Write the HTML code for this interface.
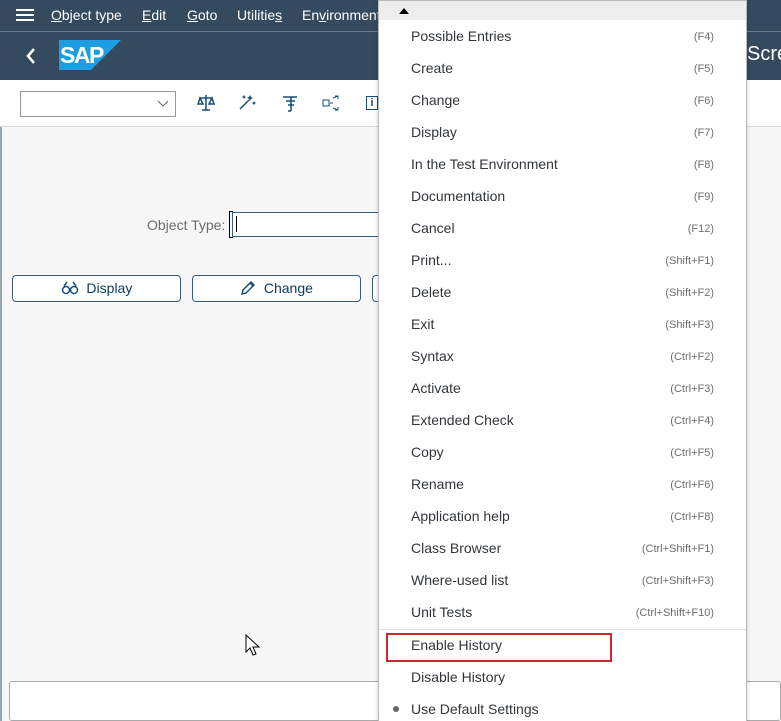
<!DOCTYPE html>
<html><head><style>
*{margin:0;padding:0;box-sizing:border-box}
body{width:781px;height:721px;overflow:hidden;position:relative;background:#f7f7f7;font-family:"Liberation Sans",Arial,sans-serif;}
.a{position:absolute}
.top{left:0;top:0;width:781px;height:31px;background:#354a5f;color:#fff;font-size:14px}
.top span{position:absolute;top:7px}
.sep{left:0;top:31px;width:781px;height:1px;background:#6a7a8a}
.bar2{left:0;top:32px;width:781px;height:48px;background:#354a5f}
.tb{left:0;top:80px;width:781px;height:47px;background:#fff;border-bottom:1px solid #d9d9d9}
.menu{left:378px;top:0;width:369px;height:721px;background:#fff;border-left:1px solid #bbb;border-right:1px solid #bbb;border-top:1px solid #bbb;box-shadow:0 0 4px rgba(0,0,0,.2)}
.it{position:absolute;left:32px;width:303px;font-size:14px;color:#32363a;height:20px}
.it b{font-weight:normal;position:absolute;right:0;top:3px;font-size:11px;color:#6a6d70}
.btn{top:275px;width:169px;height:27px;border:1px solid #3a5a7a;border-radius:4px;background:#fff;color:#0a3d62;font-size:14px;text-align:center;line-height:25px}
.ic{stroke:#1a4b7a;fill:none;stroke-width:1.5}
</style></head><body>
<div class="a" style="left:0;top:127px;width:2px;height:594px;background:#9aa7b3"></div>
<div class="a top">
<div class="a" style="left:16px;top:9px;width:18px;height:2px;background:#fff;box-shadow:0 5px 0 #fff,0 10px 0 #fff"></div>
<span style="left:51px"><u>O</u>bject type</span>
<span style="left:142px"><u>E</u>dit</span>
<span style="left:187px"><u>G</u>oto</span>
<span style="left:237px">Utilitie<u>s</u></span>
<span style="left:302px">En<u>v</u>ironment</span>
</div>
<div class="a sep"></div>
<div class="a bar2">
<svg class="a" style="left:24px;top:14px" width="14" height="20"><path d="M10 3 L4 10 L10 17" stroke="#fff" stroke-width="2.5" fill="none"/></svg>
<svg class="a" style="left:59px;top:8px" width="62" height="30"><polygon points="0,0 62,0 32,30 0,30" fill="#1d9ee0"/><text x="1" y="23" font-family="Liberation Sans" font-weight="bold" font-size="23" letter-spacing="-1.5" fill="#fff">SAP</text></svg>
<span class="a" style="left:747px;top:11px;color:#fff;font-size:20px">Scre</span>
</div>
<div class="a tb">
<div class="a" style="left:20px;top:11px;width:156px;height:26px;border:1px solid #999;background:#fff"></div>
<svg class="a" style="left:157px;top:20px" width="12" height="8"><path d="M1 1 L6 6 L11 1" stroke="#666" fill="none"/></svg>
<svg class="a" style="left:197px;top:14px" width="18" height="18"><path class="ic" d="M9 1V16 M3 4H15 M5 16H13 M3 4L1 10H6Z M15 4L12 10H17Z"/></svg>
<svg class="a" style="left:238px;top:13px" width="18" height="18"><path class="ic" d="M2 16L11 7"/><path d="M12 2l1 2 2 1-2 1-1 2-1-2-2-1 2-1z M16 8l.7 1.3 1.3.7-1.3.7-.7 1.3-.7-1.3-1.3-.7 1.3-.7z M6 2l.7 1.3 1.3.7-1.3.7-.7 1.3-.7-1.3-1.3-.7 1.3-.7z" fill="#1a4b7a"/></svg>
<svg class="a" style="left:282px;top:14px" width="16" height="18"><path class="ic" d="M1 3H15 M4 7H13 M9 3V17 M6 11H12 M9 17H6"/></svg>
<svg class="a" style="left:322px;top:15px" width="18" height="16"><rect x="1" y="5" width="6" height="6" fill="none" stroke="#1a4b7a"/><path d="M8 8 H11 M11 3 L16 1 M11 13 L16 15 M13 1h3v3 M13 15h3v-3" stroke="#1a4b7a" fill="none"/></svg>
<div class="a" style="left:366px;top:16px;width:12px;height:14px;border:1px solid #1a4b7a;font-size:11px;font-weight:bold;color:#1a4b7a;text-align:center;line-height:12px">i</div>
</div>
<span class="a" style="left:147px;top:217px;font-size:14px;color:#6a6d70">Object Type:</span>
<div class="a" style="left:232px;top:212px;width:150px;height:25px;border:1px solid #3a5a7a;background:#fff"></div>
<div class="a" style="left:229px;top:211px;width:4px;height:27px;border:1px solid #000;border-right:none"></div>
<div class="a" style="left:236px;top:216px;width:1px;height:16px;background:#000"></div>
<div class="a btn" style="left:12px"><svg width="18" height="14" style="vertical-align:-2px"><circle cx="5" cy="9" r="3.5" class="ic"/><circle cx="13" cy="9" r="3.5" class="ic"/><path class="ic" d="M3 5L6 1 M15 5L12 1"/></svg>&nbsp; Display</div>
<div class="a btn" style="left:192px"><svg width="16" height="16" style="vertical-align:-3px"><path class="ic" d="M2 14L3 10L11 2L14 5L6 13Z M10 3L13 6"/></svg>&nbsp; Change</div>
<div class="a btn" style="left:372px;width:20px"></div>
<div class="a" style="left:9px;top:681px;width:772px;height:40px;border:1px solid #aaa;border-radius:3px;background:#fff"></div>
<svg class="a" style="left:245px;top:634px" width="18" height="26"><path d="M1 1 L1 18 L5 14 L8 21 L11 20 L8 13 L14 13 Z" fill="#fff" stroke="#000"/></svg>
<div class="a menu">
<div class="a" style="left:0;top:0;width:367px;height:19px;background:#ededed"></div>
<svg class="a" style="left:20px;top:7px" width="10" height="6"><polygon points="0,6 5,0 10,6" fill="#000"/></svg>
<div class="it" style="top:27px">Possible Entries<b>(F4)</b></div>
<div class="it" style="top:59px">Create<b>(F5)</b></div>
<div class="it" style="top:91px">Change<b>(F6)</b></div>
<div class="it" style="top:123px">Display<b>(F7)</b></div>
<div class="it" style="top:155px">In the Test Environment<b>(F8)</b></div>
<div class="it" style="top:187px">Documentation<b>(F9)</b></div>
<div class="it" style="top:219px">Cancel<b>(F12)</b></div>
<div class="it" style="top:251px">Print...<b>(Shift+F1)</b></div>
<div class="it" style="top:283px">Delete<b>(Shift+F2)</b></div>
<div class="it" style="top:315px">Exit<b>(Shift+F3)</b></div>
<div class="it" style="top:347px">Syntax<b>(Ctrl+F2)</b></div>
<div class="it" style="top:379px">Activate<b>(Ctrl+F3)</b></div>
<div class="it" style="top:411px">Extended Check<b>(Ctrl+F4)</b></div>
<div class="it" style="top:443px">Copy<b>(Ctrl+F5)</b></div>
<div class="it" style="top:475px">Rename<b>(Ctrl+F6)</b></div>
<div class="it" style="top:507px">Application help<b>(Ctrl+F8)</b></div>
<div class="it" style="top:539px">Class Browser<b>(Ctrl+Shift+F1)</b></div>
<div class="it" style="top:571px">Where-used list<b>(Ctrl+Shift+F3)</b></div>
<div class="it" style="top:603px">Unit Tests<b>(Ctrl+Shift+F10)</b></div>
<div class="a" style="left:0;top:628px;width:367px;height:1px;background:#e0e0e0"></div>
<div class="it" style="top:636px">Enable History</div>
<div class="a" style="left:7px;top:632px;width:226px;height:29px;border:2px solid #d0262e"></div>
<div class="it" style="top:668px">Disable History</div>
<div class="a" style="left:14px;top:705px;width:6px;height:6px;border-radius:3px;background:#666"></div>
<div class="it" style="top:700px">Use Default Settings</div>
</div>
</body></html>
